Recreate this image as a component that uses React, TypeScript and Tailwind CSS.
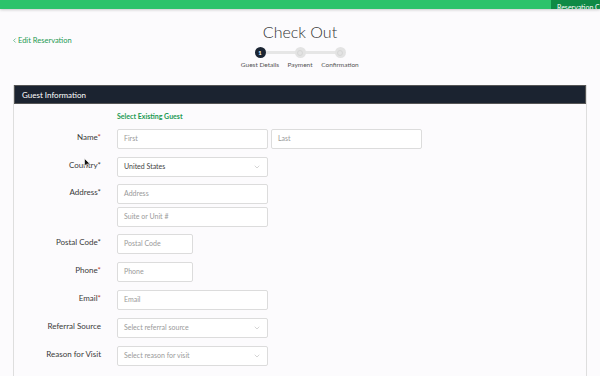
import { ChevronDown, ChevronLeft } from "lucide-react";

interface FieldProps {
  label: string;
  required?: "red" | "dark";
  className?: string;
  children: React.ReactNode;
}

function Field({ label, required, className, children }: FieldProps) {
  return (
    <div className={`flex items-start ${className ?? ""}`}>
      <div className="w-[87px] shrink-0 pt-[2px] text-right text-[8px] text-[#3a3a3a]">
        {label}
        {required && (
          <span className={required === "red" ? "text-[#c0392b]" : "text-[#3a3a3a]"}>*</span>
        )}
      </div>
      <div className="ml-[16px] flex flex-col gap-[3px]">{children}</div>
    </div>
  );
}

function Input({ placeholder, w }: { placeholder: string; w: string }) {
  return (
    <div
      className={`${w} flex h-[20px] items-center rounded-[2px] border border-[#dcdcdc] bg-white px-[6px] text-[7px] text-[#9a9a9a]`}
    >
      {placeholder}
    </div>
  );
}

function Select({ value, muted }: { value: string; muted?: boolean }) {
  return (
    <div className="flex h-[20px] w-[151px] items-center justify-between rounded-[2px] border border-[#dcdcdc] bg-white px-[6px] text-[7px]">
      <span className={muted ? "text-[#9a9a9a]" : "text-[#444]"}>{value}</span>
      <ChevronDown className="h-[8px] w-[8px] text-[#aaa]" strokeWidth={1.5} />
    </div>
  );
}

const steps = ["Guest Details", "Payment", "Confirmation"];

export default function App() {
  return (
    <div className="relative h-[376px] w-[600px] overflow-hidden bg-[#fcfbfd] font-['Lato',sans-serif]">
      {/* top bar */}
      <div className="relative flex h-[9px] justify-end bg-[#2cc36b] shadow-[0_1px_3px_rgba(0,0,0,0.2)]">
        <div className="flex w-[49px] items-end overflow-hidden bg-[#0f8a45] pl-[6px]">
          <span className="-mb-[2px] whitespace-nowrap text-[7px] leading-[8px] text-white">Reservation Cart</span>
        </div>
      </div>

      {/* heading */}
      <div className="relative h-[76px]">
        <a className="absolute left-[11px] top-[26px] flex items-center text-[7.5px] text-[#1c9a52]">
          <ChevronLeft className="h-[7px] w-[7px]" strokeWidth={2} />
          Edit Reservation
        </a>
        <div className="flex flex-col items-center pt-[13px]">
          <h1 className="text-[16px] font-light leading-[20px] text-[#333]">Check Out</h1>
          <div className="relative mt-[5px] flex">
            <div className="absolute left-[20px] right-[20px] top-[4px] h-[3px] bg-[#e6e6e6]" />
            {steps.map((s, i) => (
              <div key={s} className="relative flex w-[40px] flex-col items-center">
                {i === 0 ? (
                  <div className="flex h-[11px] w-[11px] items-center justify-center rounded-full bg-[#1b2533] text-[6px] font-bold text-white">
                    1
                  </div>
                ) : (
                  <div className="flex h-[11px] w-[11px] items-center justify-center rounded-full bg-[#e3e3e3]">
                    <div className="h-[6px] w-[6px] rounded-full border border-[#d6d6d6]" />
                  </div>
                )}
                <span className="mt-[2px] whitespace-nowrap text-[6.5px] text-[#555]">{s}</span>
              </div>
            ))}
          </div>
        </div>
      </div>

      {/* panel */}
      <div className="mx-[13px] border-x border-[#dedede]">
        <div className="flex h-[19px] items-center border border-[#555] bg-[#1b2330] px-[7px] text-[8px] text-white">
          Guest Information
        </div>
        <div className="flex flex-col gap-[8px] pb-[20px]">
          <div className="pl-[103px] pt-[7px] -mb-[1px] text-[7px] font-bold text-[#1c9a52]">
            Select Existing Guest
          </div>
          <Field label="Name" required="red">
            <div className="flex gap-[3px]">
              <Input placeholder="First" w="w-[151px]" />
              <Input placeholder="Last" w="w-[151px]" />
            </div>
          </Field>
          <Field label="Country" required="dark">
            <Select value="United States" />
          </Field>
          <Field label="Address" required="dark" className="-mt-[1px]">
            <Input placeholder="Address" w="w-[151px]" />
            <Input placeholder="Suite or Unit #" w="w-[151px]" />
          </Field>
          <Field label="Postal Code" required="dark" className="-mt-[1px]">
            <Input placeholder="Postal Code" w="w-[76px]" />
          </Field>
          <Field label="Phone" required="red">
            <Input placeholder="Phone" w="w-[76px]" />
          </Field>
          <Field label="Email" required="red">
            <Input placeholder="Email" w="w-[151px]" />
          </Field>
          <Field label="Referral Source">
            <Select value="Select referral source" muted />
          </Field>
          <Field label="Reason for Visit">
            <Select value="Select reason for visit" muted />
          </Field>
        </div>
      </div>

      {/* mouse cursor */}
      <svg className="absolute left-[84px] top-[158px]" width="7" height="10" viewBox="0 0 7 10">
        <path d="M0.5 0.5 L0.5 8 L2.3 6.3 L3.6 9.2 L4.7 8.7 L3.5 5.9 L6 5.9 Z" fill="#111" stroke="#fff" strokeWidth="0.6" />
      </svg>
    </div>
  );
}
